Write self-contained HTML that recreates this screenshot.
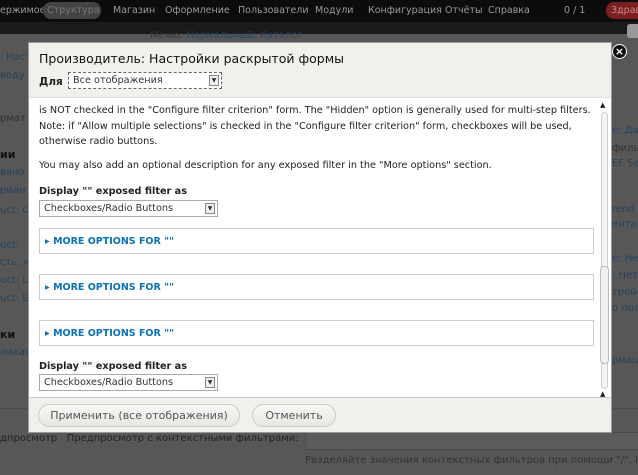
<!DOCTYPE html>
<html><head><meta charset="utf-8"><style>
*{box-sizing:border-box;margin:0;padding:0}
body{width:638px;height:475px;overflow:hidden;background:#575757;font-family:"DejaVu Sans","Liberation Sans",sans-serif;font-size:10px;color:#222;position:relative}
.abs{position:absolute;white-space:nowrap}
.top{position:absolute;left:0;top:0;width:638px;height:22px;background:#0c0c0c;color:#9a9a9a;font-size:9.5px}
.top2{position:absolute;left:0;top:22px;width:638px;height:12px;background:#1a1a1a}
.bg{color:#27435c;font-size:10px}
.modal{position:absolute;left:28px;top:42px;width:584px;height:391px;background:#f1f0eb;border:1px solid #999}
.content{position:absolute;left:0;top:54px;width:582px;height:301px;background:#fff;border-top:1px solid #ddd;border-bottom:1px solid #ccc;overflow:hidden;font-size:9.7px}
.sel{position:absolute;height:17px;border:1px solid #aaa;background:#fff;font-size:9.7px;padding:2px 4px;color:#333}
.sel .ar{position:absolute;right:2px;top:2px;width:10px;height:11px;border:1px solid #888;background:#eee;font-size:6px;text-align:center;line-height:10px}
.fs{position:absolute;left:10px;width:555px;height:26px;border:1px solid #ccc;background:#fff}
.fs span{position:absolute;left:5px;top:7px;color:#0b72b5;font-weight:bold;font-size:9.5px}
.btn{position:absolute;top:361px;height:23px;border:1px solid #ccc;border-radius:12px;background:linear-gradient(#f8f8f6,#e6e6e2);color:#555;font-size:11px;text-align:center;line-height:21px}
</style></head><body>
<div class="top">
<div class="abs" style="left:0;top:5px">ержимое</div>
<div class="abs" style="left:43px;top:2px;width:58px;height:17px;background:#444;border-radius:8px"></div>
<div class="abs" style="left:47px;top:5px;color:#777">Структура</div>
<div class="abs" style="left:113px;top:5px">Магазин</div>
<div class="abs" style="left:165px;top:5px">Оформление</div>
<div class="abs" style="left:238px;top:5px">Пользователи</div>
<div class="abs" style="left:315px;top:5px">Модули</div>
<div class="abs" style="left:368px;top:5px">Конфигурация</div>
<div class="abs" style="left:445px;top:5px">Отчёты</div>
<div class="abs" style="left:488px;top:5px">Справка</div>
<div class="abs" style="left:564px;top:5px">0 / 1</div>
<div class="abs" style="left:606px;top:2px;width:40px;height:17px;background:#7a2020;border-radius:8px;color:#c88;padding:3px 5px">Здрав</div>
</div>
<div class="top2"></div>
<div class="abs" style="left:627px;top:24px;width:14px;height:14px;background:#999;border-radius:3px"></div>
<div class="abs bg" style="left:150px;top:30px;color:#333">Меню: <span class="bg">Нормальный: Каталог</span></div>
<div class="abs bg" style="left:6px;top:52px">Наст</div>
<div class="abs bg" style="left:0;top:70px">воду</div>
<div class="abs" style="left:0;top:113px;color:#333">рмат</div>
<div class="abs" style="left:0;top:148px;color:#111;font-weight:bold;font-size:11px">ии</div>
<div class="abs bg" style="left:0;top:167px">вано</div>
<div class="abs bg" style="left:0;top:185px">риант</div>
<div class="abs bg" style="left:0;top:205px">uct: С</div>
<div class="abs bg" style="left:0;top:240px">uct:</div>
<div class="abs bg" style="left:0;top:257px">сть, к</div>
<div class="abs bg" style="left:0;top:275px">uct: Ц</div>
<div class="abs bg" style="left:0;top:293px">uct: Бл</div>
<div class="abs" style="left:0;top:328px;color:#111;font-weight:bold;font-size:11px">ки</div>
<div class="abs bg" style="left:0;top:347px">ликац</div>
<div class="abs bg" style="left:612px;top:125px">е: Да</div>
<div class="abs" style="left:612px;top:143px;color:#333">филь</div>
<div class="abs bg" style="left:612px;top:158px">EF Se</div>
<div class="abs bg" style="left:612px;top:204px">rend</div>
<div class="abs bg" style="left:612px;top:219px">ента</div>
<div class="abs bg" style="left:612px;top:253px">е: Не</div>
<div class="abs bg" style="left:612px;top:270px">: Нет</div>
<div class="abs bg" style="left:612px;top:287px">трой</div>
<div class="abs bg" style="left:612px;top:303px">о пол</div>
<div class="abs bg" style="left:612px;top:355px">рмац</div>
<div class="abs" style="left:0;top:408px;width:638px;height:1px;background:#4a4a4a"></div>
<div class="abs" style="left:0;top:433px;color:#222">дпросмотр &nbsp; Предпросмотр с контекстными фильтрами:</div>
<div class="abs" style="left:305px;top:432px;width:340px;height:18px;border:1px solid #4a4a4a;background:#5c5c5c"></div>
<div class="abs" style="left:305px;top:455px;color:#333">Разделяйте значения контекстных фильтров при помощи "/". На</div>

<div class="modal">
<div class="abs" style="left:10px;top:8px;font-size:12.5px;color:#111">Производитель: Настройки раскрытой формы</div>
<div class="abs" style="left:10px;top:33px;font-weight:bold;font-size:10.5px">Для</div>
<div class="sel" style="left:39px;top:29px;width:154px;border:1px dashed #666">Все отображения<div class="ar">▼</div></div>
<div class="content">
<div class="abs" style="left:10px;top:5px;line-height:15.5px">is NOT checked in the "Configure filter criterion" form. The "Hidden" option is generally used for multi-step filters.<br>Note: if "Allow multiple selections" is checked in the "Configure filter criterion" form, checkboxes will be used,<br>otherwise radio buttons.</div>
<div class="abs" style="left:10px;top:62px">You may also add an optional description for any exposed filter in the "More options" section.</div>
<div class="abs" style="left:10px;top:88px;font-weight:bold">Display "" exposed filter as</div>
<div class="sel" style="left:10px;top:102px;width:179px">Checkboxes/Radio Buttons<div class="ar">▼</div></div>
<div class="fs" style="top:130px"><span>▸ MORE OPTIONS FOR ""</span></div>
<div class="fs" style="top:176px"><span>▸ MORE OPTIONS FOR ""</span></div>
<div class="fs" style="top:222px"><span>▸ MORE OPTIONS FOR ""</span></div>
<div class="abs" style="left:10px;top:263px;font-weight:bold">Display "" exposed filter as</div>
<div class="sel" style="left:10px;top:276px;width:179px">Checkboxes/Radio Buttons<div class="ar">▼</div></div>
<div class="abs" style="left:569px;top:0;width:13px;height:301px;background:#fff"></div>
<div class="abs" style="left:571px;top:3px;font-size:7px">▲</div>
<div class="abs" style="left:572px;top:14px;width:7px;height:277px;border:1px solid #ccc;border-radius:4px;background:#f4f4f4"></div>
<div class="abs" style="left:571px;top:168px;width:9px;height:98px;border:1px solid #bbb;border-radius:4px;background:#f0f0f0"></div>
<div class="abs" style="left:571px;top:292px;font-size:7px">▲</div>
</div>
<div class="btn" style="left:9px;width:202px">Применить (все отображения)</div>
<div class="btn" style="left:223px;width:84px">Отменить</div>
</div>
<div class="abs" style="left:612px;top:44px;width:15px;height:15px;border-radius:50%;background:#111;border:1px solid #fff;color:#fff;font-size:11px;font-weight:bold;text-align:center;line-height:13px">×</div>
</body></html>
